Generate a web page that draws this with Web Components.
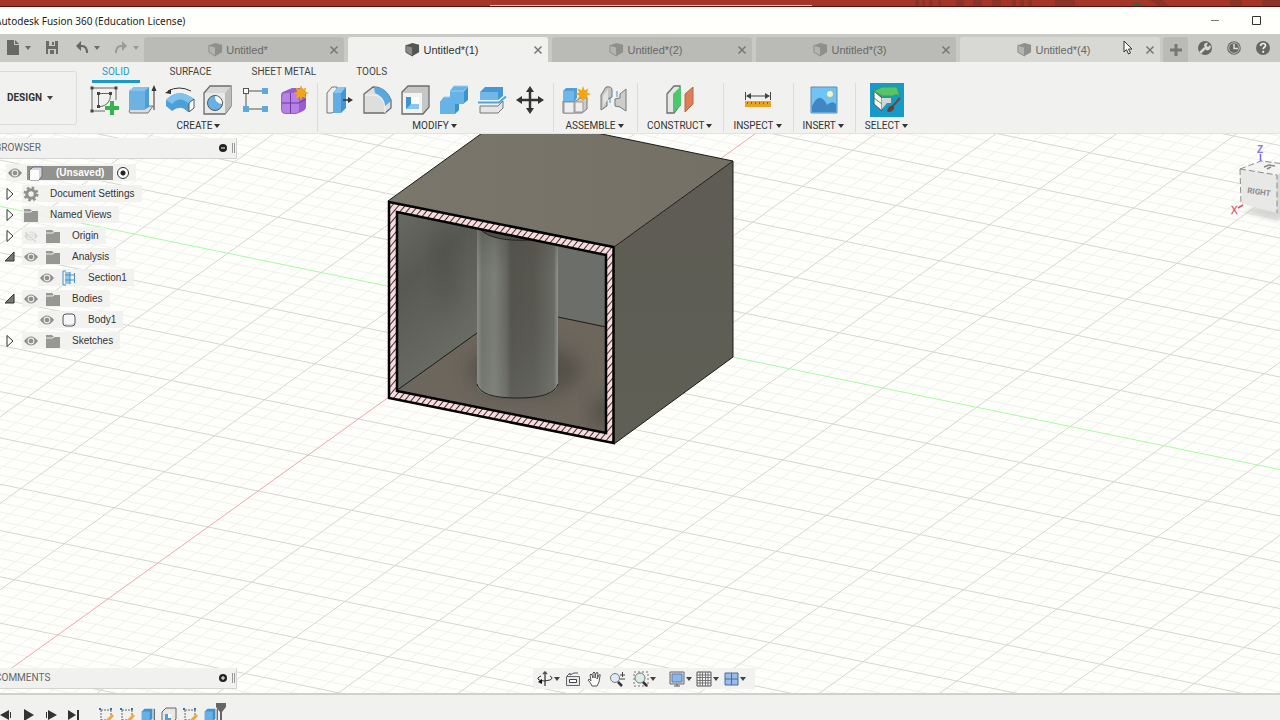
<!DOCTYPE html>
<html lang="en">
<head>
<meta charset="utf-8">
<meta name="viewport" content="width=device-width, initial-scale=1">
<title>Autodesk Fusion 360 (Education License)</title>
<style>
html, body { margin: 0; height: 100%; overflow: hidden; }
body {
  --bar: #f1f2ef; --strip: #c9cac6; --text: #444; --accent: #1a9acb;
  --label: Roboto, sans-serif;
  font: 11px/12px "Liberation Sans", sans-serif; color: var(--text); background: #fefefa;
}
</style>
</head>
<body>
<fusion-app></fusion-app>
<script>
const RESET = `*{box-sizing:border-box} button{all:unset;box-sizing:border-box;display:flex;align-items:center;justify-content:center;cursor:default} button:focus-visible{outline:1px solid #1a9acb}`;

function define(name, css, html, setup) {
  customElements.define(name, class extends HTMLElement {
    constructor() {
      super();
      const root = this.attachShadow({ mode: 'open' });
      const t = document.createElement('template');
      t.innerHTML = `<style>${RESET}${css}</style>` + (typeof html === 'string' ? html : '');
      root.append(t.content.cloneNode(true));
    }
    connectedCallback() {
      if (typeof html === 'function' && !this.ready) {
        this.ready = true;
        const t = document.createElement('template');
        t.innerHTML = html(this);
        this.shadowRoot.append(t.content.cloneNode(true));
      }
      if (setup) setup(this, this.shadowRoot);
    }
  });
}

/* Icon set: [viewBox size, markup] */
const eye = `<path d="M1 8Q8 -1 15 8Q8 17 1 8Z" fill="#8f8f8b"/><circle cx="8" cy="8" r="3.4" fill="#eee"/><circle cx="8" cy="8" r="2.3" fill="#8f8f8b"/>`;
const spark = `<path d="M0-8 1.500-3.800 5.500-5.500 3.800-1.500 8 0 3.800 1.500 5.500 5.500 1.500 3.800 0 8-1.500 3.800-5.500 5.500-3.800 1.500-8 0-3.800-1.500-5.500-5.500-1.500-3.800Z" fill="#f2a516"/>`;
const ICONS = {
  file: [20, `<path d="M4 2h7v5h5v10H4Z" fill="#686866"/><path d="M12 2l4 4h-4Z" fill="#686866"/>`],
  save: [20, `<path d="M4 3h12v13H4Z" fill="#6b6b69"/><path d="M7 3h6v5H7ZM6 11h8v5H6Z" fill="#c9cac6"/><path d="M10 4h2v3h-2ZM8 12h4v4H8Z" fill="#6b6b69"/>`],
  undo: [20, `<path d="M6 8h4q5 0 5 7" fill="none" stroke="#666" stroke-width="2"/><path d="M9 3v10L4 8Z" fill="#666"/>`],
  redo: [20, `<path d="M14 8h-4q-5 0-5 7" fill="none" stroke="#9b9b99" stroke-width="2"/><path d="M11 3v10l5-5Z" fill="#9b9b99"/>`],
  box: [16, `<path d="M1 3.500 8 1l7 2v8l-7 4-7-4Z" fill="var(--d,#8f8f8c)"/><path d="M1 3.500 8 5.500V15L1 11Z" fill="var(--l,#b3b3b0)" stroke="var(--d,#8f8f8c)"/>`],
  close: [12, `<path d="M2.500 2.500l7 7M9.500 2.500l-7 7" stroke="#777" stroke-width="1.500"/>`],
  plus: [16, `<path d="M8 2v12M2 8h12" stroke="#777" stroke-width="3"/>`],
  wrench: [16, `<circle cx="8" cy="8" r="7" fill="#666"/><path d="M3 13l5-5" stroke="#d5d5d2" stroke-width="2.500"/><path d="M7 5a3 3 0 0 1 4-2L9.500 5.500l1.500 1.500L13 5a3 3 0 0 1-5 4Z" fill="#d5d5d2"/>`],
  clock: [16, `<circle cx="8" cy="8" r="6.800" fill="#666"/><circle cx="8" cy="8" r="5.300" fill="none" stroke="#bbb"/><path d="M8 4v4.500h4" fill="none" stroke="#ddd" stroke-width="1.500"/>`],
  help: [16, `<circle cx="8" cy="8" r="7" fill="#666"/><path d="M5.500 6q.3-2.500 2.700-2.500 2.300 0 2.300 2 0 1.200-1.400 2-.9.600-.9 1.700" fill="none" stroke="#eee" stroke-width="1.700"/><circle cx="8.200" cy="11.800" r="1.100" fill="#eee"/>`],
  sketch: [30, `<g fill="none" stroke="#666"><path d="M4 3h22M3 4v21M27 4v11M4 26h12"/><path d="M9.500 10v11M11 8.500h10M21.500 10q0 10-11 12"/></g><path d="M1.500 1.500h3v3h-3zM25.500 1.500h3v3h-3zM1.500 24.500h3v3h-3zM8 7h3v3H8zM20 7h3v3h-3zM8 20h3v3H8z" fill="#444"/><path d="M16 21h5v-5h4v5h5v4h-5v5h-4v-5h-5z" fill="#35b34e"/>`],
  extrude: [30, `<path d="M2 26l4-5h20l-5 7H3Z" fill="#ddd" stroke="#777"/><path d="M2 6l5-4h15v20l-5 3H2Z" fill="#4b9fd9"/><path d="M2 6l5-4h15l-4 4Z" fill="#86c4ee"/><path d="M2 6h16v19H2Z" fill="#6cb3e4"/><path d="M27 25V4" stroke="#333"/><path d="M27 0l2.500 6h-5z" fill="#333"/>`],
  revolve: [30, `<path d="M3 6Q14 0 26 6" fill="none" stroke="#333"/><path d="M0 8l6-4v5z" fill="#333"/><path d="M1 15Q13 2 29 14v9l-6 4q-7-8-16-1L1 21Z" fill="#4d9fd8"/><path d="M1 15Q13 2 29 14l-5 5Q15 10 7 19Z" fill="#7fc2ee"/><path d="M24 18l5-4v9l-5 4Z" fill="#fff" stroke="#555"/>`],
  hole: [30, `<path d="M1 8l6-7h21v20l-6 8H1Z" fill="#d9d9d7" stroke="#6e6e6c" stroke-width="1.300"/><path d="M2 8h20v20H2Z" fill="#e9e9e7"/><path d="M22 8l6-7v20l-6 8Z" fill="#bdbdbb"/><circle cx="12" cy="18" r="7.500" fill="#66b2e6" stroke="#555"/><path d="M12 11a7 7 0 0 0 7 8 7 7 0 0 0-7-8Z" fill="#fff"/>`],
  pattern: [30, `<path d="M8 6h14M5 9v12M8 24h14" stroke="#555"/><rect x="2.500" y="3.500" width="5" height="5" fill="#fff" stroke="#555"/><path d="M21 3h6v6h-6zM2 21h6v6H2zM21 21h6v6h-6z" fill="#5aabdf"/>`],
  form: [30, `<path d="M2 10q0-3 4-4l7-3h9q5 1 5 6v13q0 3-5 5l-5 2H7q-5 0-5-5Z" fill="#9a5dd0"/><path d="M3 12q0-4 4-4h9q4 0 4 4v12q0 4-4 4H7q-4 0-4-4Z" fill="#b681e6"/><path d="M11.500 8v20M3 18h17l7-4" stroke="#6b3b9c" fill="none"/><g transform="translate(22 8)">${spark}</g>`],
  press: [30, `<path d="M2 8l5-6h5v21l-5 5H2Z" fill="#eee" stroke="#777"/><path d="M8 8l5-6h8v21l-5 5H8Z" fill="#4296d4"/><path d="M8 8l5-6h8l-5 6Z" fill="#8ac7ef"/><path d="M8 8h8v20H8Z" fill="#62aee3"/><path d="M18 15h6" stroke="#333" stroke-width="1.500"/><path d="M23 12l5 3-5 3z" fill="#333"/>`],
  fillet: [30, `<path d="M1 9l9-7q12 0 18 13v8l-6 5H1Z" fill="#dededc" stroke="#6e6e6c" stroke-width="1.300"/><path d="M2 10h9q10 1 11 12v6" fill="none" stroke="#f5f5f3"/><path d="M11 2q13 0 17 14l-6 5q0-9-10-13Z" fill="#58a9e0"/>`],
  shell: [30, `<path d="M1 7l6-6h21v21l-6 7H1Z" fill="#c6c6c4" stroke="#6e6e6c" stroke-width="1.300"/><path d="M2 8h19v20H2Z" fill="#f3f3f1"/><path d="M5 12h13v12H5Z" fill="#3f93cf"/><path d="M10 12h8v8h-8Z" fill="#fff"/><path d="M5 24l5-5h8v5Z" fill="#86c6f0"/>`],
  combine: [30, `<path d="M1 17l4-5h6V6l4-5h14v14l-5 4h-4v6l-4 4H1Z" fill="#3e91cf"/><path d="M1 17l4-5h6V6l4-5h14l-4 5v13H16v10H1Z" fill="#68b3e6"/><path d="M5 12h6M15 1h14l-4 5H11" stroke="#96cef3" fill="none"/>`],
  split: [30, `<path d="M3 7l5-5h18v9l-5 4H3Z" fill="#4598d5"/><path d="M3 7h18v8H3Z" fill="#70b8e8"/><path d="M1 17.500h21l7-6" stroke="#4ea5df" fill="none" stroke-width="2"/><path d="M3 21h18l5-5v7l-5 5H3Z" fill="#e5e5e3" stroke="#777"/>`],
  move: [30, `<path d="M15 4v22M4 15h22" stroke="#333" stroke-width="2.500"/><path d="M15 1l4 6h-8zM15 29l-4-6h8zM1 15l6-4v8zM29 15l-6 4v-8z" fill="#333"/>`],
  component: [30, `<path d="M2 16h13l4-3h7v11l-5 4H2Z" fill="#ccc" stroke="#777"/><path d="M3 17h10v11H3zM14 17h8v10h-8z" fill="#eee" stroke="#999"/><path d="M2 6l3-3h11v10l-3 4H2Z" fill="#4f9fd8"/><path d="M2 6h11v10H2Z" fill="#6fb7e8"/><g transform="translate(22 9)">${spark}</g>`],
  joint: [30, `<path d="M2 25V10l5-8q6-1 6 3v7l-5 3v6Z" fill="#c4c4c2" stroke="#777"/><path d="M4 22V11l5-7v11l-3 3Z" fill="#e2e2e0"/><path d="M27 26V4l-6 5v4l-5 1v7l5 1Z" fill="#cdcdcb" stroke="#777"/><path d="M11 18v-6M18 12V6" stroke="#3d97d4"/>`],
  planes: [30, `<path d="M2 9l7-8h6v19l-6 8H2Z" fill="#e6e6e4" stroke="#6e6e6c" stroke-width="1.300"/><path d="M8 9l8-8v19l-8 8Z" fill="#4cc76d"/><path d="M20 9l8-7v17l-8 8Z" fill="#dd7f55" stroke="#b06a48"/>`],
  measure: [30, `<path d="M2.500 7v8M27.500 7v8M4 11h22" stroke="#444"/><path d="M3 11l5-3v6zM27 11l-5-3v6z" fill="#444"/><path d="M2 16h26v6H2Z" fill="#eaa21f"/><path d="M4.500 17v2M8.500 17v2M12.500 17v2M16.500 17v2M20.500 17v2M24.500 17v2" stroke="#956004"/>`],
  image: [30, `<path d="M2 2h26v26H2Z" fill="#70c3f2" stroke="#5a8fb5"/><circle cx="21" cy="9" r="3" fill="#fbf3b4"/><path d="M3 21q5-10 9-8t6 7q5-5 9-1v8H3Z" fill="#3f86c4"/>`],
  select: [34, `<path d="M0 0h34v34H0Z" fill="#169ac9"/><path d="M4 8l8 7v13l-8-7Z" fill="#f5f5f5" stroke="#555"/><path d="M4 15l8 6M4 8l8-4h15l3 10q-3-4-7-1h-11Z" fill="#59c36a" stroke="#35a14b"/><path d="M12 15h9v5h-4l-5 6Z" fill="#d5d5d3"/><path d="M30 15l-8 9" stroke="#6c4a36" stroke-width="2"/><path d="M17 28q2-6 6-5 3 2-1 5-3 2-5 0Z" fill="#6f3c27"/>`],
  eye: [16, eye],
  eyeoff: [16, `<g opacity=".25">${eye}</g><path d="M3 3l10 10" stroke="#eee" stroke-width="2"/><path d="M2 4l11 10" stroke="#ccc"/>`],
  folder: [16, `<path d="M1 2h6l2 2h6v11H1Z" fill="#979793"/><path d="M1 5h7l1-1" stroke="#eee" fill="none"/>`],
  gear: [16, `<circle cx="8" cy="8" r="6" fill="none" stroke="#90908c" stroke-width="3" stroke-dasharray="2.400 2.310"/><circle cx="8" cy="8" r="4.200" fill="none" stroke="#90908c" stroke-width="3"/>`],
  doc: [16, `<path d="M2 5l3-3h9v9l-3 4H2Z" fill="#d4d6e0" stroke="#707078"/><path d="M2 5h9v10H2Z" fill="#fcfcff"/>`],
  body: [16, `<rect x="2" y="2" width="12" height="12" rx="3" fill="#f5f5fa" stroke="#55555f"/><path d="M4 11q4 3 9 0v2H4Z" fill="#cfd1da"/>`],
  section: [16, `<path d="M4 2h5v12H4Z" fill="#8ec7ee"/><path d="M2 1v14M2 1h3M2 15h3M4 5h10M4 10h10M9 2v12M13.500 3v10" stroke="#4c8fc0" fill="none"/>`],
  minus: [10, `<circle cx="5" cy="5" r="4" fill="#222"/><path d="M3 5h4" stroke="#fff"/>`],
  add: [10, `<circle cx="5" cy="5" r="4" fill="#222"/><path d="M3 5h4M5 3v4" stroke="#fff"/>`],
  orbit: [16, `<path d="M8 1v14M6 3l2-2 2 2" stroke="#555" fill="none" stroke-width="1.500"/><path d="M13 5q4 2 0 4-6 2-11 0-3-2 2-4" fill="none" stroke="#333"/><path d="M1 11l4-3v5z" fill="#111"/>`],
  lookat: [16, `<path d="M1.500 5.500h13v9h-13Z" fill="#e8e8ee" stroke="#666"/><path d="M4.500 8.500h7v3h-7Z" fill="#fff" stroke="#444"/><path d="M2 5l3-3v2q4-3 8-2" stroke="#555" fill="none"/>`],
  hand: [16, `<path d="M5 15q-1-3-4-6 1-2 3 1l-1-6q1-2 2 0l1 3V2q1-2 2 0v5l1-5q1-1 2 0l-1 6 2-4q2-1 1 1l-1 6-2 4Z" fill="#fff" stroke="#555"/>`],
  zoom: [16, `<circle cx="6" cy="7" r="4.500" fill="#dcebf7" stroke="#777"/><path d="M9 11l4 4" stroke="#333" stroke-width="2.500"/><path d="M11 4h5M13.500 1v5M11 8h5" stroke="#444"/>`],
  fit: [16, `<path d="M1 1h14v14H1Z" fill="none" stroke="#777" stroke-dasharray="2 2"/><circle cx="7" cy="7" r="5" fill="#d9ecea" stroke="#777"/><path d="M10 11l4 4" stroke="#333" stroke-width="2.500"/>`],
  display: [16, `<path d="M1 1h14v12H1Z" fill="#ddd" stroke="#666"/><path d="M3 3h10v8H3Z" fill="#8fb6e6" stroke="#557fb5"/><path d="M5 15h6M8 13v2" stroke="#555"/>`],
  grid: [16, `<path d="M1 1h14v14H1Z" fill="#f5f5f8" stroke="#555"/><path d="M1 4h14M1 6.500h14M1 9.500h14M1 12h14M4 1v14M6.500 1v14M9.500 1v14M12 1v14" stroke="#777"/>`],
  views: [16, `<path d="M2 2h13v12H2Z" fill="#9dbbe4" stroke="#466ca6"/><path d="M8.500 2v12M2 8h13" stroke="#466ca6"/>`],
  prev: [16, `<path d="M1 8l9-5v10zM11 5h1v6h-1z" fill="#333"/>`],
  play: [16, `<path d="M3 2l10 6-10 6z" fill="#333"/>`],
  step: [16, `<path d="M5 3l9 5-9 5zM3 5h1v6H3z" fill="#333"/>`],
  end: [16, `<path d="M3 3l8 5-8 5zM12 3h2v10h-2z" fill="#333"/>`],
  tsketch: [16, `<path d="M3 3h10M3 3v10M13 3v6M3 13h7" stroke="#666" stroke-dasharray="2 1"/><path d="M1 1h2v2H1zM12 1h2v2h-2z" fill="#2678bd"/><path d="M9 14l6-6" stroke="#f0a83c" stroke-width="3"/>`],
  textrude: [18, `<path d="M2 5l3-3h9v11l-3 3H2Z" fill="#3f91d0"/><path d="M2 5h9v11H2Z" fill="#69b1e4"/><path d="M16 2v14" stroke="#222"/>`],
  tshell: [16, `<path d="M1 5l4-4h10v11l-4 4H1Z" fill="#e8e8e6" stroke="#666"/><path d="M4 7h6v7H4Z" fill="#4f9fda"/><path d="M7 7h4v4H7Z" fill="#fff"/>`]
};

define('app-icon', `:host{display:block;flex:none} svg{display:block}`, el => {
  const [box, art] = ICONS[el.getAttribute('name')];
  const s = el.getAttribute('size') || box;
  return `<svg width="${s}" height="${s}" viewBox="0 0 ${box} ${box}" aria-hidden="true">${art}</svg>`;
});

define('menu-caret', `:host{display:block;flex:none;width:8px} svg{display:block;margin:0 auto}`,
  `<svg width="6" height="4" viewBox="0 0 6 4"><path d="M0 0h6L3 4Z" fill="currentColor"/></svg>`);

define('title-bar', `
  :host{display:block;background:#fffffc;color:#222}
  .strip{display:block;width:100%;height:7px}
  .bar{display:flex;align-items:center;height:27px;font:10px/16px "Noto Sans","Open Sans",sans-serif}
  .name{flex:1;margin-left:-5px;white-space:nowrap}
  button{width:41px;height:26px}
  .end{width:4px}`, `
  <svg class="strip" viewBox="0 0 1280 7" preserveAspectRatio="none" aria-hidden="true">
    <path d="M0 0h1280v7H0Z" fill="#a43629"/>
    <path d="M915 0h4v6h-4zM922 0h3v6h-3zM929 0h4v6h-4zM938 0h3v6h-3zM956 0h8v6h-8zM973 0h9v6h-9zM992 0h9v6h-9zM1012 0h4v6h-4zM1020 0h4v6h-4zM1028 0h4v6h-4zM1055 0h20v6h-20zM1150 0h12l8 6h-12zM1230 0h12v6h-12zM1262 0h18v6h-18z" fill="#8b3328"/>
    <circle cx="1137" cy="10" r="7" fill="#236b4f"/>
    <path d="M0 6h1280v1H0Z" fill="#571009"/><path d="M490 5h322v1H490Z" fill="#f2c6bd"/>
  </svg>
  <div class="bar"><span class="name">Autodesk Fusion 360 (Education License)</span>
    <button aria-label="Minimize"><svg width="10" height="10"><path d="M1 4.500h8" stroke="#777"/></svg></button>
    <button aria-label="Maximize"><svg width="10" height="10"><path d="M1.500.500h8v8h-8Z" fill="none" stroke="#333"/></svg></button>
    <span class="end"></span></div>`);

define('doc-tab', `
  :host{display:flex;flex:1;min-width:0;align-items:center;padding:0 4px;background:#babbb7;color:#686866;border-radius:3px 3px 0 0}
  :host([active]){background:#f1f2ef;color:#333;--d:#555553;--l:#8c8c89}
  :host([hover]){background:#d8d9d5}
  .name{flex:1;gap:3px;height:25px;white-space:nowrap}`,
  `<button class="name" role="tab"><app-icon name="box" size="15"></app-icon><slot></slot></button>
   <button aria-label="Close"><app-icon name="close"></app-icon></button>`);

define('tab-strip', `
  :host{display:flex;height:28px;padding-top:3px;background:var(--strip)}
  .quick{display:flex;gap:10px;width:144px;padding-left:3px;align-items:flex-start}
  .quick button{gap:1px;height:22px;color:#6c6c6a} .quick .off{color:#999}
  .tabs{display:flex;flex:1;gap:4px;min-width:0}
  .new{width:25px;margin:0 2px 0 3px;background:#babbb7;border-radius:3px 3px 0 0}
  .tool{width:29px;height:22px} .last{margin-right:3px}`, `
  <div class="quick">
    <button aria-label="File"><app-icon name="file"></app-icon><menu-caret></menu-caret></button>
    <button aria-label="Save"><app-icon name="save"></app-icon></button>
    <button aria-label="Undo"><app-icon name="undo"></app-icon><menu-caret></menu-caret></button>
    <button class="off" aria-label="Redo"><app-icon name="redo"></app-icon><menu-caret></menu-caret></button>
  </div>
  <div class="tabs" role="tablist">
    <doc-tab>Untitled*</doc-tab><doc-tab active>Untitled*(1)</doc-tab><doc-tab>Untitled*(2)</doc-tab><doc-tab>Untitled*(3)</doc-tab><doc-tab hover>Untitled*(4)</doc-tab>
  </div>
  <button class="new" aria-label="New design"><app-icon name="plus"></app-icon></button>
  <button class="tool" aria-label="Extensions"><app-icon name="wrench"></app-icon></button>
  <button class="tool" aria-label="Job status"><app-icon name="clock"></app-icon></button>
  <button class="tool last" aria-label="Help"><app-icon name="help"></app-icon></button>`);

define('tool-group', `
  :host{display:flex;flex-direction:column;align-items:center;padding:0 4px 0 3px;border-right:1px solid #dcddd9}
  :host(:last-of-type){border:0}
  .icons{display:flex;height:34px} .icons button{width:38px}
  .label{gap:1px;height:12px;margin-top:3px;padding:0 6px;font:10px/12px var(--label);color:#333;white-space:nowrap}`,
  el => `<div class="icons">${el.getAttribute('icons').split(' ').map(n => `<button aria-label="${n}"><app-icon name="${n}"></app-icon></button>`).join('')}</div>
   <button class="label"><slot></slot><menu-caret></menu-caret></button>`);

define('tool-ribbon', `
  :host{display:flex;height:72px;background:var(--bar);border-bottom:1px solid #e2e3df}
  .work{display:flex;align-items:center;align-self:flex-start;width:77px;height:54px;margin:9px 5px 0 0;padding-left:7px;border:1px solid #dcddd9;border-left:0;border-radius:0 3px 3px 0;gap:1px}
  select{appearance:none;border:0;padding:0;margin:0;background:none;font:bold 10px/14px var(--label);color:#333;width:38px}
  .tabs{display:flex;gap:20px;padding-left:10px;height:21px}
  .tabs button{padding:4px 10px 0;align-items:flex-start;font:10px/12px var(--label);border-bottom:3px solid transparent}
  .tabs .on{color:var(--accent);border-color:var(--accent)}
  .groups{display:flex}`, `
  <div class="work"><select aria-label="Workspace"><option>DESIGN</option></select><menu-caret></menu-caret></div>
  <div>
    <div class="tabs" role="tablist"><button class="on" role="tab">SOLID</button><button role="tab">SURFACE</button><button role="tab">SHEET METAL</button><button role="tab">TOOLS</button></div>
    <div class="groups">
      <tool-group icons="sketch extrude revolve hole pattern form">CREATE</tool-group>
      <tool-group icons="press fillet shell combine split move">MODIFY</tool-group>
      <tool-group icons="component joint">ASSEMBLE</tool-group>
      <tool-group icons="planes">CONSTRUCT</tool-group>
      <tool-group icons="measure">INSPECT</tool-group>
      <tool-group icons="image">INSERT</tool-group>
      <tool-group icons="select">SELECT</tool-group>
    </div>
  </div>`);

define('panel-header', `
  :host{display:flex;align-items:center;width:237px;height:21px;background:var(--bar);border-bottom:1px solid #d3d4d0;border-right:1px solid #d3d4d0;color:#666;font:10px/12px var(--label)}
  .name{flex:1;margin-left:-5px} .grip{width:3px;height:10px;margin:0 1px 0 4px;border:solid #999;border-width:0 1px}`,
  el => `<span class="name"><slot></slot></span><button aria-label="Toggle panel"><app-icon name="${el.getAttribute('icon')}"></app-icon></button><span class="grip"></span>`);

define('tree-row', `
  :host{display:flex;align-items:center;height:21px;font-size:10px;color:#333}
  :host([child]){padding-left:16px}
  .caret{width:22px;height:17px;padding-right:3px}
  .body{display:flex;align-items:center;gap:6px;height:17px;padding:0 7px 0 1px;background:rgba(241,242,239,.9)}
  .name{padding-left:5px;white-space:nowrap}
  :host([root]) .body{margin-left:6px;gap:4px}
  .sel{display:flex;align-items:center;width:86px;height:14px;padding-left:1px;background:#92928e;color:#fff;font-weight:bold;gap:7px}
  input{appearance:none;width:12px;height:12px;margin:0;border:1px solid #333;border-radius:50%;background:radial-gradient(#222 0 2px,#fff 3px)}`,
  el => {
    const icons = el.getAttribute('icons').split(' ').map(n => `<app-icon name="${n}"></app-icon>`).join('');
    if (el.hasAttribute('root')) return `<div class="body"><app-icon name="eye"></app-icon><span class="sel"><app-icon name="doc"></app-icon><span class="name"><slot></slot></span></span><input type="radio" checked aria-label="Activate component"></div>`;
    const open = el.hasAttribute('open');
    const mark = open ? `<path d="M9 1v9H0Z" fill="#777" stroke="#333"/>` : `<path d="M2 .5v11l6-5.500Z" fill="#fff" stroke="#333"/>`;
    return `<button class="caret" aria-label="Expand">${el.hasAttribute('child') ? '' : `<svg width="10" height="12">${mark}</svg>`}</button><div class="body">${icons}<span class="name"><slot></slot></span></div>`;
  });

define('browser-panel', `:host{display:block} .tree{padding-top:3px}`, `
  <panel-header icon="minus">BROWSER</panel-header>
  <div class="tree">
    <tree-row root icons="eye">(Unsaved)</tree-row>
    <tree-row icons="gear">Document Settings</tree-row>
    <tree-row icons="folder">Named Views</tree-row>
    <tree-row icons="eyeoff folder">Origin</tree-row>
    <tree-row open icons="eye folder">Analysis</tree-row>
    <tree-row child icons="eye section">Section1</tree-row>
    <tree-row open icons="eye folder">Bodies</tree-row>
    <tree-row child icons="eye body">Body1</tree-row>
    <tree-row icons="eye folder">Sketches</tree-row>
  </div>`);

define('view-cube', `:host{display:block;width:56px;height:90px;overflow:hidden} svg{display:block} text{font-family:"Liberation Sans",sans-serif}`, `
  <svg width="56" height="90" viewBox="1224 138 56 90">
    <defs><filter id="b"><feGaussianBlur stdDeviation="2"/></filter></defs>
    <path d="M1243 212l34 9 10-6v-20Z" fill="#bbb" opacity=".6" filter="url(#b)"/>
    <path d="M1240 169l21-8 24 3-8 11Z" fill="#f3f3f2"/><path d="M1240 169l37 6v38l-35-9Z" fill="#e8e8e7"/><path d="M1277 175l8-5v38l-8 5Z" fill="#d8d8d7"/>
    <path d="M1240 169l21-8 24 3M1240 169l37 6v38M1240 169l1 35" fill="none" stroke="#8b8b8b" stroke-dasharray="6 3"/>
    <path d="M1264 167l5-2 6 1M1267 169l4-2" fill="none" stroke="#888" stroke-width="1.500"/>
    <path d="M1260.500 154v7" stroke="#7468e8" stroke-width="1.500"/><path d="M1238 208l5-3" stroke="#e0526a" stroke-width="1.500"/>
    <text x="1257" y="153" font-size="10" font-weight="bold" fill="#8478ec">Z</text>
    <text x="1231" y="214" font-size="10" fill="#e0526a" stroke="#e0526a" stroke-width=".3">X</text>
    <text transform="translate(1247 193) rotate(8)" font-size="8" style="font-family:Roboto,sans-serif" font-weight="bold" fill="#8b8b90">RIGHT</text>
  </svg>`);

define('nav-bar', `
  :host{display:flex;align-items:center;height:21px;padding:0 7px 0 2px;background:rgba(241,242,239,.92)}
  button{height:21px;width:22px} .menu{width:27px} .fit{width:34px;margin-right:5px}`, `
  <button class="menu" aria-label="Orbit"><app-icon name="orbit"></app-icon><menu-caret></menu-caret></button>
  <button aria-label="Look at"><app-icon name="lookat"></app-icon></button>
  <button aria-label="Pan"><app-icon name="hand"></app-icon></button>
  <button aria-label="Zoom"><app-icon name="zoom"></app-icon></button>
  <button class="fit" aria-label="Fit"><app-icon name="fit"></app-icon><menu-caret></menu-caret></button>
  <button class="menu" aria-label="Display settings"><app-icon name="display"></app-icon><menu-caret></menu-caret></button>
  <button class="menu" aria-label="Grid and snaps"><app-icon name="grid"></app-icon><menu-caret></menu-caret></button>
  <button class="menu" aria-label="Viewports"><app-icon name="views"></app-icon><menu-caret></menu-caret></button>`);

/* Model space: orthographic ground grid, world axes and the sectioned solid. */
define('model-scene', `:host{display:block;min-width:0;min-height:0;overflow:hidden} svg{display:block;width:100%;height:100%}`, `
  <svg viewBox="0 134 1280 559" preserveAspectRatio="xMidYMid slice" aria-label="Sectioned hollow box with a cylinder inside">
    <defs>
      <pattern id="hatch" width="5" height="8" patternUnits="userSpaceOnUse" patternTransform="rotate(40)"><path d="M0 0h5v8H0Z" fill="#fadadc"/><path d="M2.500 0v8" stroke="#333"/></pattern>
      <linearGradient id="top" x1="0" y1="0" x2="1" y2="0"><stop offset="0" stop-color="#7b766c"/><stop offset="1" stop-color="#757066"/></linearGradient>
      <linearGradient id="side" x1="0" y1="0" x2="0" y2="1"><stop offset="0" stop-color="#5e5c54"/><stop offset="1" stop-color="#5f5f56"/></linearGradient>
      <linearGradient id="wall" x1="0" y1="0" x2=".4" y2="1"><stop offset="0" stop-color="#6a6c66"/><stop offset=".4" stop-color="#585952"/><stop offset="1" stop-color="#6d6f69"/></linearGradient>
      <linearGradient id="cyl" x1="0" y1="0" x2="1" y2="0"><stop offset="0" stop-color="#8e918c"/><stop offset=".06" stop-color="#71736d"/><stop offset=".22" stop-color="#7c7e78"/><stop offset=".36" stop-color="#676760"/><stop offset=".42" stop-color="#54534c"/><stop offset=".7" stop-color="#57574f"/><stop offset=".95" stop-color="#686a63"/><stop offset="1" stop-color="#959892"/></linearGradient>
      <linearGradient id="shade" x1="0" y1="0" x2="0" y2="1"><stop offset="0" stop-color="#484841" stop-opacity=".5"/><stop offset=".3" stop-color="#555" stop-opacity="0"/><stop offset="1" stop-color="#8e958e" stop-opacity=".2"/></linearGradient>
      <clipPath id="in"><path d="M396 211l210 43v180l-210-43Z"/></clipPath>
      <filter id="soft" x="-50%" y="-50%" width="200%" height="200%"><feGaussianBlur stdDeviation="9"/></filter>
    </defs>
    <path d="M-600-400h2500v2000H-600Z" fill="#fefefa"/>
    <g class="grid"></g>
    <path d="M388 201l97-70h102l146 30-119 86Z" fill="url(#top)"/>
    <path d="M614 247l119-86v196l-119 87Z" fill="url(#side)"/>
    <path d="M388 201l97-70M587 131l146 30v196l-119 87M614 247l119-86" fill="none" stroke="#1c1b18"/>
    <g clip-path="url(#in)">
      <path d="M390 205h90v200h-90Z" fill="url(#wall)"/>
      <path d="M558 230h50v98l-50-11Z" fill="#6b6e69"/>
      <path d="M390 396l87-63 81-16 50 10v120H390Z" fill="#6c665d"/>
      <ellipse cx="525" cy="370" rx="56" ry="26" fill="#45423b" opacity=".6" filter="url(#soft)"/>
      <ellipse cx="604" cy="412" rx="13" ry="16" fill="#45423b" opacity=".6" filter="url(#soft)"/>
      <ellipse cx="446" cy="270" rx="10" ry="42" fill="#474740" opacity=".35" filter="url(#soft)"/>
      <path d="M396 391l81-58M558 317l48 10" stroke="#1c1b18"/>
      <path d="M477 220h81v164q0 14-41 14t-40-14Z" fill="url(#cyl)"/>
      <path d="M477 220h81v164q0 14-41 14t-40-14Z" fill="url(#shade)"/>
      <path d="M477 384q3 14 40 14t41-14" fill="none" stroke="#222"/>
      <path d="M480 229q12 13 50 11Z" fill="#4c4d48" stroke="#222"/>
    </g>
    <path fill-rule="evenodd" d="M389 202l224 45v196l-224-45ZM396 212v179l209 42V255Z" fill="url(#hatch)"/>
    <path d="M389 202l224.500 45v196l-224.500-45Z" fill="none" stroke="#000" stroke-width="2.500"/>
    <path d="M397 212v179l209 42V255Z" fill="none" stroke="#000" stroke-width="2.500"/>
  </svg>`, (el, root) => {
  const g = root.querySelector('.grid');
  if (g.childNodes.length) return;
  const O = [508.6, 311], U = [-50.1, 36], V = [93.6, 19.25], DIV = 5, N = 24;
  const at = (a, b) => `${(O[0] + a * V[0] + b * U[0]).toFixed(1)} ${(O[1] + a * V[1] + b * U[1]).toFixed(1)}`;
  let minor = '', major = '';
  for (let i = -N * DIV; i <= N * DIV; i++) {
    if (!i) continue;
    const k = i / DIV, d = `M${at(k, -N)}L${at(k, N)}M${at(-N, k)}L${at(N, k)}`;
    if (i % DIV) minor += d; else major += d;
  }
  const add = (d, c) => {
    const p = document.createElementNS('http://www.w3.org/2000/svg', 'path');
    p.setAttribute('d', d); p.setAttribute('stroke', c); p.setAttribute('fill', 'none'); g.append(p);
  };
  add(minor, '#f0f0ed'); add(major, '#d6d6d2');
  add(`M${at(-N, 0)}L${at(N, 0)}`, '#a9fba4');
  add(`M${at(0, -N)}L${at(0, N)}`, '#f2a5b2');
});

define('model-viewport', `
  :host{display:grid;min-height:0;flex:1;overflow:hidden}
  model-scene,.over{grid-area:1/1}
  .over{display:flex;flex-direction:column;justify-content:space-between;padding:4px 0;min-height:0;z-index:1}
  .top{display:flex;justify-content:space-between}
  .bottom{display:grid;grid-template-columns:237px 1fr 229px;justify-items:center}`, `
  <model-scene></model-scene>
  <div class="over">
    <div class="top"><browser-panel></browser-panel><view-cube></view-cube></div>
    <div class="bottom"><panel-header icon="add">COMMENTS</panel-header><nav-bar></nav-bar></div>
  </div>`);

define('time-line', `
  :host{display:flex;align-items:flex-start;height:27px;padding-top:12px;overflow:hidden;background:var(--bar);border-top:2px solid #d0d1cd}
  .play{display:flex;gap:6px;margin-left:-1px} .steps{display:flex;gap:5px;margin-left:17px}
  .steps button{width:16px} .mark{margin:-4px 0 0 -4px}`, `
  <div class="play">
    <button aria-label="Step back"><app-icon name="prev"></app-icon></button><button aria-label="Play"><app-icon name="play"></app-icon></button>
    <button aria-label="Step forward"><app-icon name="step"></app-icon></button><button aria-label="Go to end"><app-icon name="end"></app-icon></button>
  </div>
  <div class="steps">
    <button aria-label="Sketch1"><app-icon name="tsketch"></app-icon></button><button aria-label="Sketch2"><app-icon name="tsketch"></app-icon></button>
    <button aria-label="Extrude1"><app-icon name="textrude" size="16"></app-icon></button><button aria-label="Shell1"><app-icon name="tshell"></app-icon></button>
    <button aria-label="Sketch3"><app-icon name="tsketch"></app-icon></button><button aria-label="Extrude2"><app-icon name="textrude" size="16"></app-icon></button>
  </div>
  <svg class="mark" width="12" height="24"><path d="M1 0h10v4L7 9v15H5V9L1 4Z" fill="#666"/></svg>`);

define('fusion-app', `
  :host{display:flex;flex-direction:column;height:100vh;overflow:hidden;position:relative}
  .cursor{position:absolute;left:1123px;top:40px;z-index:2}`, `
  <title-bar></title-bar><tab-strip></tab-strip><tool-ribbon></tool-ribbon>
  <model-viewport></model-viewport><time-line></time-line>
  <svg class="cursor" width="10" height="15"><path d="M1 1v11l2.500-2.500L5.500 14l2-1-2-4H9Z" fill="#fff" stroke="#333"/></svg>`);
</script>
</body>
</html>
